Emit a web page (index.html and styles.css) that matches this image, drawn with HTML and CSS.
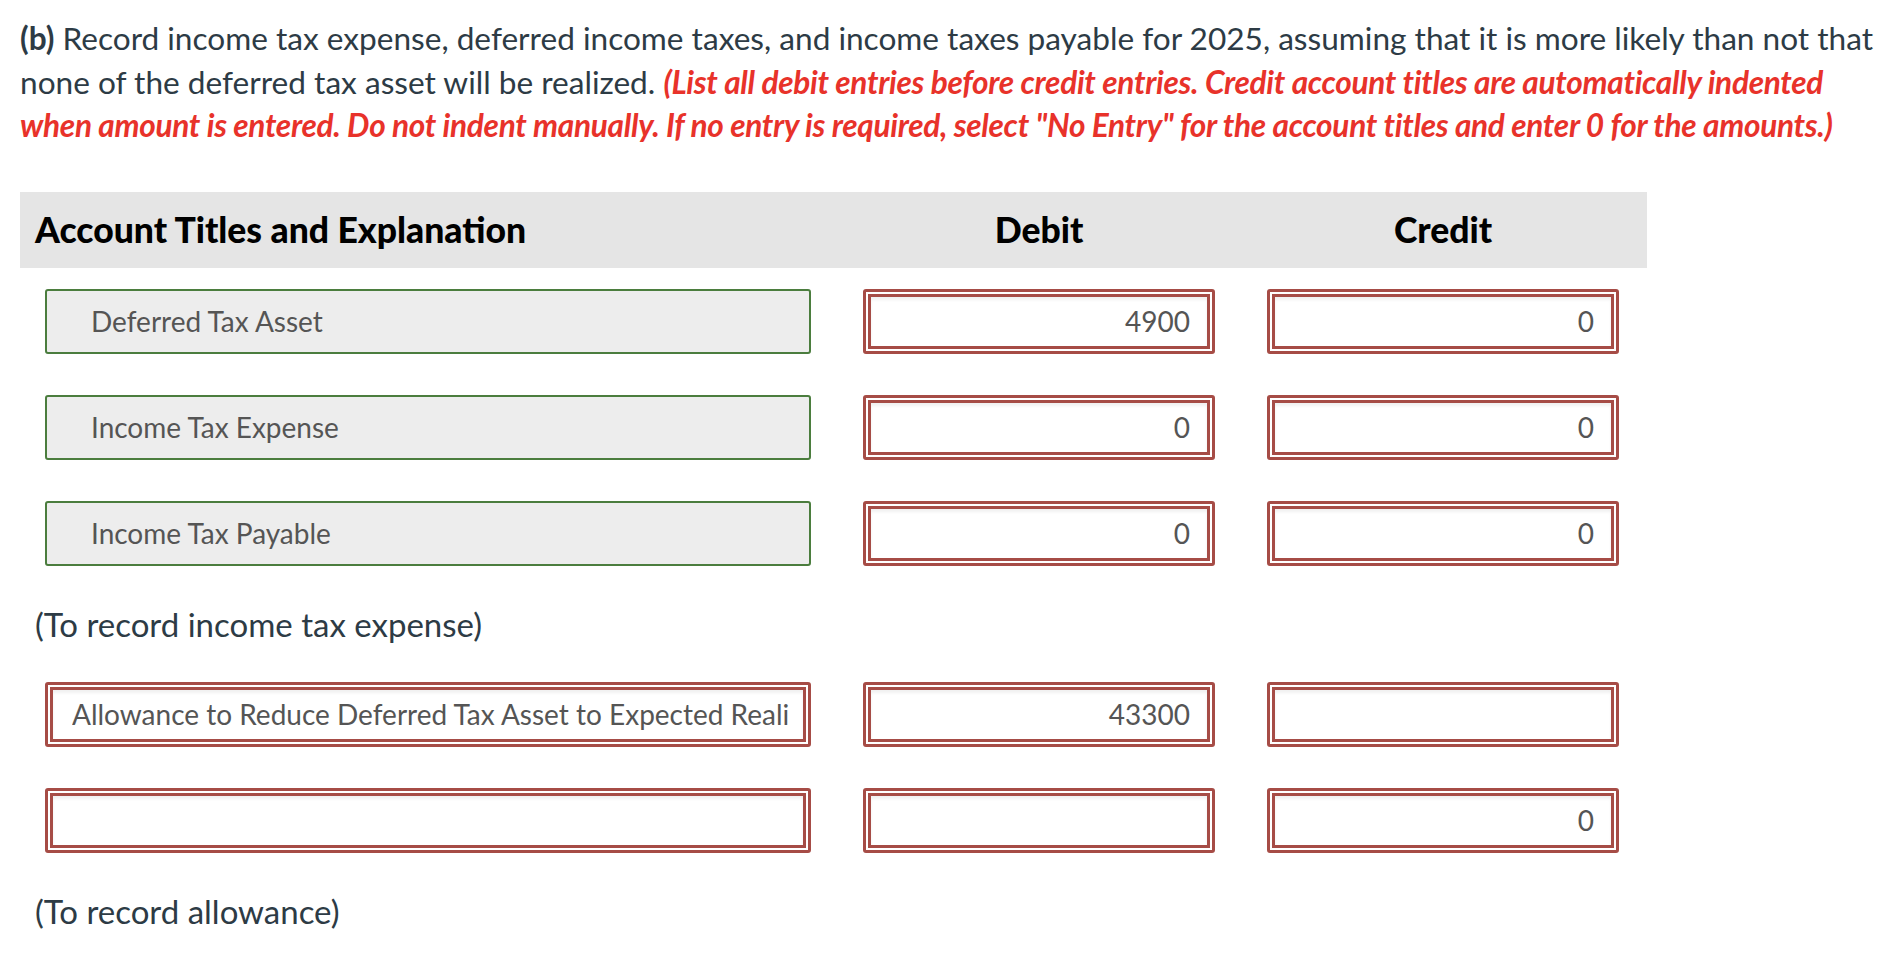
FILE: index.html
```html
<!DOCTYPE html>
<html lang="en">
<head>
    <meta charset="UTF-8">
    <meta name="viewport" content="width=device-width, initial-scale=1.0">
    <title>Journal Entry</title>
    <link rel="stylesheet" href="styles.css">
</head>
<body>
    <div class="question">
        <p class="prompt">
            <b>(b)</b> Record income tax expense, deferred income taxes, and income taxes payable for 2025, assuming that it is more likely than not that none of the deferred tax asset will be realized.
            <span class="hint">(List all debit entries before credit entries. Credit account titles are automatically indented when amount is entered. Do not indent manually. If no entry is required, select "No Entry" for the account titles and enter 0 for the amounts.)</span>
        </p>

        <div class="journal">
            <div class="head">
                <div class="head-title">Account Titles and Explanation</div>
                <div class="head-amount">Debit</div>
                <div class="head-amount">Credit</div>
            </div>

            <div class="entry">
                <div class="line">
                    <div class="account ok"><input type="text" value="Deferred Tax Asset" readonly></div>
                    <div class="amount wrong"><input type="text" value="4900"></div>
                    <div class="amount wrong"><input type="text" value="0"></div>
                </div>
                <div class="line">
                    <div class="account ok"><input type="text" value="Income Tax Expense" readonly></div>
                    <div class="amount wrong"><input type="text" value="0"></div>
                    <div class="amount wrong"><input type="text" value="0"></div>
                </div>
                <div class="line">
                    <div class="account ok"><input type="text" value="Income Tax Payable" readonly></div>
                    <div class="amount wrong"><input type="text" value="0"></div>
                    <div class="amount wrong"><input type="text" value="0"></div>
                </div>
            </div>
            <p class="note">(To record income tax expense)</p>

            <div class="entry">
                <div class="line">
                    <div class="account wrong"><input type="text" value="Allowance to Reduce Deferred Tax Asset to Expected Reali"></div>
                    <div class="amount wrong"><input type="text" value="43300"></div>
                    <div class="amount wrong"><input type="text" value=""></div>
                </div>
                <div class="line">
                    <div class="account wrong"><input type="text" value=""></div>
                    <div class="amount wrong"><input type="text" value=""></div>
                    <div class="amount wrong"><input type="text" value="0"></div>
                </div>
            </div>
            <p class="note">(To record allowance)</p>
        </div>
    </div>
</body>
</html>
```

FILE: styles.css
```css
body {
    margin: 0;
    padding: 0;
    background: white;
    font-family: Lato, "Open Sans", sans-serif;
    color: #2d3b45;
}

.question {
    padding: 17px 0 0 20px;
    width: 1872px;
}

.prompt {
    margin: 0 0 44px;
    font-size: 31.6px;
    line-height: 43.5px;
}

.prompt b {
    font-weight: 700;
}

.hint {
    color: #e8322a;
    font-weight: 700;
    font-style: italic;
    letter-spacing: -0.3px;
}

.journal {
    width: 1627px;
}

.head {
    display: grid;
    grid-template-columns: 776px 352px 352px;
    column-gap: 52px;
    align-items: center;
    height: 76px;
    padding-left: 15px;
    background: #e5e5e5;
    color: black;
    font-size: 35.5px;
    font-weight: 900;
    margin-bottom: 21px;
}

.head-amount {
    text-align: center;
}

.entry {
    display: flex;
    flex-direction: column;
    gap: 41px;
    padding-left: 25px;
}

.line {
    display: grid;
    grid-template-columns: 766px 352px 352px;
    column-gap: 52px;
    height: 65px;
}

.line > div {
    box-sizing: border-box;
    height: 65px;
    border-radius: 3px;
}

input {
    box-sizing: border-box;
    width: 100%;
    height: 100%;
    margin: 0;
    font-family: Lato, "Open Sans", sans-serif;
    font-size: 28px;
    color: #555;
    outline: none;
}

.ok {
    border: 2px solid #4b7d3e;
    background: #ededed;
}

.ok input {
    border: none;
    background: transparent;
    padding: 0 0 0 44px;
}

.wrong {
    border: 3px solid #a64c46;
    padding: 2px;
    background: white;
}

.wrong input {
    border: 3px solid #a64c46;
    background: white;
    box-shadow: inset 0 3px 3px rgba(0, 0, 0, 0.06);
}

.account.wrong input {
    padding: 0 0 0 19px;
}

.amount input {
    text-align: right;
    padding: 0 17px 0 0;
}

.note {
    margin: 37px 0 36px 15px;
    font-size: 33px;
    line-height: 43px;
}
```
